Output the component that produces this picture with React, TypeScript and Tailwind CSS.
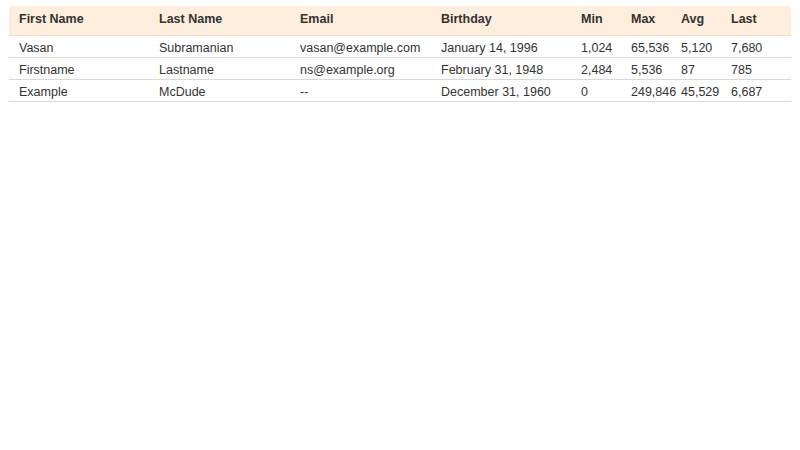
import React from 'react';

const rows = [
  ['Vasan', 'Subramanian', 'vasan@example.com', 'January 14, 1996', '1,024', '65,536', '5,120', '7,680'],
  ['Firstname', 'Lastname', 'ns@example.org', 'February 31, 1948', '2,484', '5,536', '87', '785'],
  ['Example', 'McDude', '--', 'December 31, 1960', '0', '249,846', '45,529', '6,687'],
];

const headers = ['First Name', 'Last Name', 'Email', 'Birthday', 'Min', 'Max', 'Avg', 'Last'];
const widths = ['w-[140px]', 'w-[141px]', 'w-[141px]', 'w-[140px]', 'w-[50px]', 'w-[50px]', 'w-[50px]', 'w-[70px]'];

export default function App() {
  return (
    <div className="w-[800px] h-[450px] bg-white pt-[6px] pl-[9px] font-['Liberation_Sans',Arial,sans-serif] text-[12.5px] text-[#333]">
      <table className="table-fixed w-[782px] border-collapse">
        <colgroup>
          {widths.map((w, i) => (
            <col key={i} className={w} />
          ))}
        </colgroup>
        <thead>
          <tr className="bg-[#fdeedd] border-b border-[#f3dfcc]">
            {headers.map((h) => (
              <th key={h} className="text-left align-top font-bold pl-[10px] pt-[6px] h-[29px] leading-[15px] whitespace-nowrap">
                {h}
              </th>
            ))}
          </tr>
        </thead>
        <tbody>
          {rows.map((r, i) => (
            <tr key={i} className="border-b border-[#d9d9d9]">
              {r.map((c, j) => (
                <td key={j} className="pl-[10px] pt-[5px] align-top h-[22px] leading-[15px] whitespace-nowrap">
                  {c}
                </td>
              ))}
            </tr>
          ))}
        </tbody>
      </table>
    </div>
  );
}
